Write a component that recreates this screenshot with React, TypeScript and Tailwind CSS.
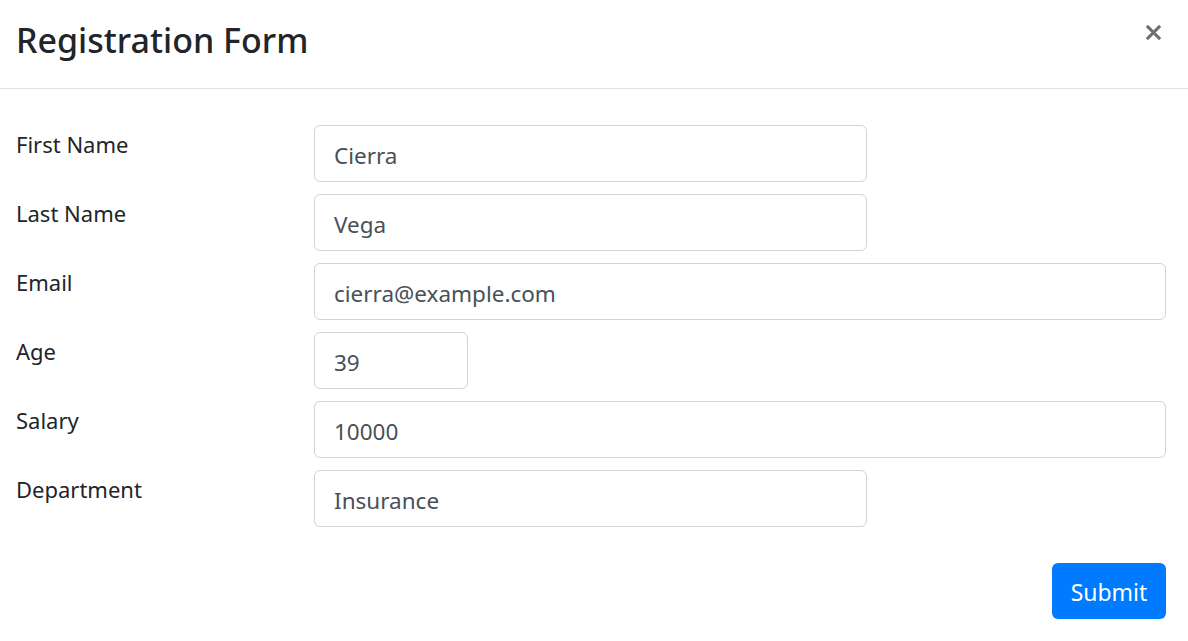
const fields = [
    { label: "First Name", value: "Cierra", width: "w-[553px]" },
    { label: "Last Name", value: "Vega", width: "w-[553px]" },
    { label: "Email", value: "cierra@example.com", width: "flex-1" },
    { label: "Age", value: "39", width: "w-[154px]" },
    { label: "Salary", value: "10000", width: "flex-1" },
    { label: "Department", value: "Insurance", width: "w-[553px]" },
];

const App = () => {
    return (
        <div className="w-[1188px] h-[641px] bg-white text-[#212529] font-['Noto_Sans',sans-serif]">
            {/* Header */}
            <div className="flex items-center justify-between h-[89px] border-b border-[#dee2e6] pl-4 pr-[26px]">
                <h4 className="text-[34px] leading-[54px] font-medium -mt-[9px]">Registration Form</h4>
                <button className="text-[#6f6f6f] -mt-[24px]">
                    <svg width="17" height="17" viewBox="0 0 18 18" fill="none" stroke="currentColor" strokeWidth="3.2" strokeLinecap="butt">
                        <path d="M2 2 L16 16 M16 2 L2 16" />
                    </svg>
                </button>
            </div>

            {/* Body */}
            <div className="pt-[36px] pl-4 pr-[22px] flex flex-col gap-3">
                {fields.map((f) => (
                    <div key={f.label} className="flex items-start">
                        <label className="w-[298px] shrink-0 text-[22px] leading-[36px] pt-[1px]">{f.label}</label>
                        <input
                            readOnly
                            value={f.value}
                            className={`${f.width} h-[57px] border border-[#ced4da] rounded-[6px] px-[19px] pt-[3px] text-[22.5px] text-[#495057] outline-none`}
                        />
                    </div>
                ))}
            </div>

            {/* Footer */}
            <div className="flex justify-end pr-[22px] pt-[36px]">
                <button className="h-[56px] w-[114px] bg-[#007bff] text-white text-[23px] rounded-[6px] pt-[2px]">Submit</button>
            </div>
        </div>
    );
};

export default App;
